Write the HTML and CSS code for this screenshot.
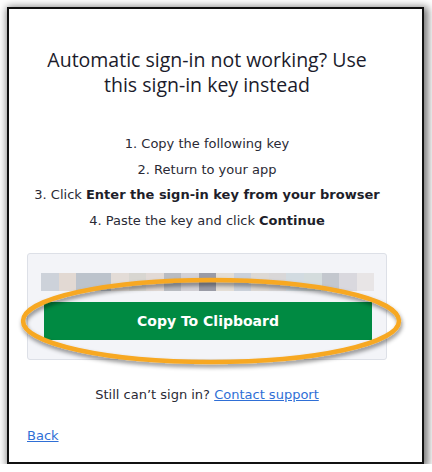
FILE: index.html
```html
<!DOCTYPE html>
<html lang="en">
<head>
  <meta charset="UTF-8">
  <title>Sign-in key</title>
  <link rel="stylesheet" href="styles.css">
</head>
<body>

  <div class="window">
    <div class="content">
      <h1>Automatic sign-in not working? Use this sign-in key instead</h1>

      <!-- Schritte -->
      <ol class="steps">
        <li>1. Copy the following key</li>
        <li>2. Return to your app</li>
        <li>3. Click <b>Enter the sign-in key from your browser</b></li>
        <li>4. Paste the key and click <b>Continue</b></li>
      </ol>

      <!-- Key-Box mit verpixeltem Schluessel -->
      <div class="key-box">
        <div class="key">
          <span class="k1"></span><span class="k2"></span><span class="k3"></span><span class="k4"></span>
          <span class="k5"></span><span class="k6"></span><span class="k7"></span><span class="k8"></span>
          <span class="k9"></span><span class="k10"></span><span class="k11"></span><span class="k12"></span>
          <span class="k13"></span><span class="k14"></span><span class="k15"></span><span class="k16"></span>
          <span class="k17"></span><span class="k18"></span><span class="k19"></span>
        </div>
        <button class="copy-btn">Copy To Clipboard</button>
      </div>

      <p class="support">Still can’t sign in? <a href="#">Contact support</a></p>

      <a class="back" href="#">Back</a>
    </div>

    <!-- Markierung um den Button -->
    <svg class="ring" width="400" height="100" viewBox="0 0 400 100">
      <defs>
        <filter id="shade" x="-10%" y="-30%" width="120%" height="160%">
          <feDropShadow dx="1" dy="3" stdDeviation="2" flood-color="#000" flood-opacity="0.45"/>
        </filter>
      </defs>
      <ellipse cx="196" cy="48" rx="188" ry="41" fill="none" stroke="#f7a823" stroke-width="4.5" filter="url(#shade)"/>
    </svg>
  </div>

</body>
</html>
```

FILE: styles.css
```css
body {
  margin: 0;
  background: #fff;
  font-family: "DejaVu Sans", Verdana, sans-serif;
  color: #222;
}
.window {
  position: relative;
  box-sizing: border-box;
  width: 417px;
  height: 457px;
  margin: 7px 0 0 7px;
  border: 2px solid #111;
  background: #fff;
  box-shadow: 2px 2px 8px 2px rgba(0, 0, 0, 0.55);
}
.content {
  width: 360px;
  margin-left: 18px;
  padding-top: 38px;
  text-align: center;
}
h1 {
  margin: 0 0 34px;
  padding: 0 12px;
  font-family: "Open Sans", sans-serif;
  font-size: 19.5px;
  font-weight: 500;
  line-height: 25px;
  color: #1b1b2b;
}
.steps {
  list-style: none;
  margin: 0;
  padding: 0;
  font-size: 13px;
  line-height: 25.6px;
  color: #2a2a35;
}
.steps b {
  color: #1e1e2a;
}
.key-box {
  margin-top: 20px;
  box-sizing: border-box;
  height: 107px;
  padding: 19px 12px 0 13px;
  background: #f3f4f8;
  border: 1px solid #dde0e7;
  border-radius: 3px;
}
.key {
  display: flex;
  height: 18px;
}
.key span {
  flex: 1;
}
.k1 { background: #cdd2da; }
.k2 { background: #e2d9d3; }
.k3 { background: #bcc3cc; }
.k4 { background: #bcc3cc; }
.k5 { background: #e3dcd7; }
.k6 { background: #d8d6d1; }
.k7 { background: #e2dad6; }
.k8 { background: #b9bcc2; }
.k9 { background: #d3d1d6; }
.k10 { background: #9a9ba6; }
.k11 { background: #e4ded6; }
.k12 { background: #cbd1da; }
.k13 { background: #ddd9d5; }
.k14 { background: #d9d7d8; }
.k15 { background: #d2dbe1; }
.k16 { background: #d4dcdd; }
.k17 { background: #c3c7ce; }
.k18 { background: #d9d8de; }
.k19 { background: #e8e5e6; }
.copy-btn {
  display: block;
  width: 328px;
  height: 38px;
  margin: 11px 0 0 3px;
  border: none;
  background: #008a42;
  color: #fff;
  font-family: "DejaVu Sans", Verdana, sans-serif;
  font-size: 14px;
  font-weight: bold;
}
.support {
  margin: 26px 0 0;
  font-size: 13px;
  line-height: 18px;
  color: #2a2a35;
}
a {
  color: #2f6fd6;
}
.back {
  display: block;
  margin-top: 23px;
  text-align: left;
  font-size: 13px;
  line-height: 18px;
}
.ring {
  position: absolute;
  left: 6px;
  top: 264px;
}
```
